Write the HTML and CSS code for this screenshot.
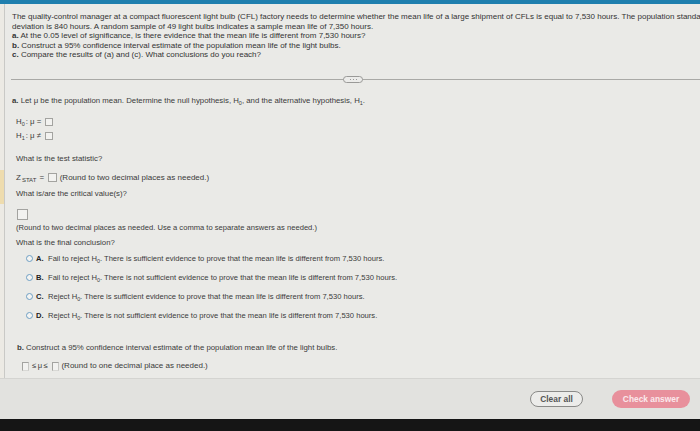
FILE: index.html
```html
<!DOCTYPE html>
<html>
<head>
<meta charset="utf-8">
<link rel="stylesheet" href="styles.css">
</head>
<body>
<div class="topbar"></div>
<div class="main">
  <div class="gutter"><div class="mark"></div></div>
  <div class="panel">
    <div class="problem">
      <p>The quality-control manager at a compact fluorescent light bulb (CFL) factory needs to determine whether the mean life of a large shipment of CFLs is equal to 7,530 hours. The population standard</p>
      <p>deviation is 840 hours. A random sample of 49 light bulbs indicates a sample mean life of 7,350 hours.</p>
      <p><b>a.</b> At the 0.05 level of significance, is there evidence that the mean life is different from 7,530 hours?</p>
      <p><b>b.</b> Construct a 95% confidence interval estimate of the population mean life of the light bulbs.</p>
      <p><b>c.</b> Compare the results of (a) and (c). What conclusions do you reach?</p>
    </div>
    <div class="divider"><span class="pill"><i></i><i></i><i></i></span></div>
    <div class="content">
      <p class="q1"><b>a.</b> Let μ be the population mean. Determine the null hypothesis, H<sub>0</sub>, and the alternative hypothesis, H<sub>1</sub>.</p>
      <div class="hyp first">H<sub>0</sub>: μ = <span class="box"></span></div>
      <div class="hyp">H<sub>1</sub>: μ ≠ <span class="box"></span></div>
      <p class="q2">What is the test statistic?</p>
      <div class="zline">Z<sub class="stat">STAT</sub> = <span class="box"></span> <span class="note">(Round to two decimal places as needed.)</span></div>
      <p class="q3">What is/are the critical value(s)?</p>
      <div class="cvbox"><span class="box big"></span></div>
      <p class="q4">(Round to two decimal places as needed. Use a comma to separate answers as needed.)</p>
      <p class="q5">What is the final conclusion?</p>
      <ul class="opts">
        <li><span class="radio"></span><b>A.</b><span>Fail to reject H<sub>0</sub>. There is sufficient evidence to prove that the mean life is different from 7,530 hours.</span></li>
        <li><span class="radio"></span><b>B.</b><span>Fail to reject H<sub>0</sub>. There is not sufficient evidence to prove that the mean life is different from 7,530 hours.</span></li>
        <li><span class="radio"></span><b>C.</b><span>Reject H<sub>0</sub>. There is sufficient evidence to prove that the mean life is different from 7,530 hours.</span></li>
        <li><span class="radio"></span><b>D.</b><span>Reject H<sub>0</sub>. There is not sufficient evidence to prove that the mean life is different from 7,530 hours.</span></li>
      </ul>
      <p class="q6"><b>b.</b> Construct a 95% confidence interval estimate of the population mean life of the light bulbs.</p>
      <div class="interval"><span class="box open"></span><span class="sym">≤μ≤</span><span class="box open"></span> <span class="note">(Round to one decimal place as needed.)</span></div>
    </div>
  </div>
</div>
<div class="footer">
  <button class="btn clear">Clear all</button>
  <button class="btn check">Check answer</button>
</div>
<div class="black"></div>
</body>
</html>
```
FILE: styles.css
```css
html, body {
  margin: 0;
  padding: 0;
}
body {
  width: 700px;
  height: 431px;
  overflow: hidden;
  background: #e7e7e4;
  font-family: "Liberation Sans", Arial, sans-serif;
  color: #3a3a3a;
  display: flex;
  flex-direction: column;
}
p { margin: 0; }
sub { font-size: 70%; vertical-align: -2px; line-height: 0; }
.topbar {
  height: 4px;
  background: #1f7fae;
  flex: none;
}
.main {
  display: flex;
  height: 374px;
  flex: none;
}
.gutter {
  width: 4px;
  background: #eceae4;
  flex: none;
}
.mark {
  margin-top: 166px;
  height: 34px;
  background: #eedcae;
}
.panel {
  flex: 1;
  border-left: 1px solid #c9c9c6;
  background: #eaeae7;
  min-width: 0;
}
.problem {
  padding: 8px 0 0 7px;
  font-size: 8px;
  line-height: 9.5px;
  white-space: nowrap;
  overflow: hidden;
  color: #333;
}
.divider {
  margin: 19.5px 0 0 6px;
  height: 1px;
  background: #a9a9a6;
  position: relative;
}
.pill {
  position: absolute;
  left: 332px;
  top: -3px;
  width: 20px;
  height: 7px;
  border: 1px solid #9a9a98;
  border-radius: 4px;
  background: #ececea;
  box-sizing: border-box;
  display: flex;
  justify-content: center;
  align-items: center;
  gap: 2px;
}
.pill i {
  width: 1px;
  height: 1px;
  background: #999;
}
.content {
  padding: 0 0 0 7px;
  font-size: 7.8px;
  line-height: 9px;
  white-space: nowrap;
  color: #3a3a3a;
}
.q1 { margin-top: 15.5px; }
.hyp {
  height: 14px;
  line-height: 14px;
  padding-left: 4px;
}
.hyp sub { margin-right: 1px; }
.hyp .box { margin-left: 2px; }
.hyp.first { margin-top: 10.5px; }
.box {
  display: inline-block;
  width: 8px;
  height: 8px;
  border: 1px solid #a3a3a0;
  background: #f2f2f0;
  box-sizing: border-box;
  vertical-align: middle;
  margin-left: 0;
}
.box.big {
  width: 11px;
  height: 11px;
}
.box.open {
  width: 7px;
  height: 9px;
  border-right-color: #c8c8c5;
  border-bottom-color: #d8d8d5;
}
.q2 { margin-top: 10.5px; padding-left: 4px; }
.zline {
  margin-top: 9.5px;
  height: 12px;
  line-height: 12px;
  padding-left: 4px;
  font-size: 8px;
}
.zline .stat { font-size: 6px; margin: 0 1px 0 1px; }
.zline .box { width: 9px; height: 9px; margin-left: 2px; }
.zline .note { font-size: 8px; }
.q3 { margin-top: 4.5px; padding-left: 4px; }
.cvbox { margin-top: 11px; height: 11px; line-height: 11px; padding-left: 5px; }
.cvbox .box { vertical-align: top; }
.q4 { margin-top: 3px; padding-left: 4px; font-size: 7.6px; }
.q5 { margin-top: 6px; padding-left: 4px; }
.opts {
  list-style: none;
  margin: 3.15px 0 0 0;
  padding: 0 0 0 14px;
  font-size: 7.6px;
}
.opts li {
  display: flex;
  align-items: center;
  height: 18.7px;
}
.radio {
  width: 7px;
  height: 7px;
  border: 1px solid #6d9fc4;
  border-radius: 50%;
  background: #f4f4f2;
  flex: none;
  box-sizing: border-box;
}
.opts b {
  margin-left: 3px;
  width: 12px;
  color: #222;
}
.q6 { margin-top: 19px; padding-left: 5px; }
.interval {
  margin-top: 8px;
  height: 11px;
  line-height: 11px;
  padding-left: 10px;
  font-size: 8px;
}
.interval .sym { margin: 0 3px 0 3px; letter-spacing: 1.5px; font-size: 7.6px; }
.footer {
  flex: none;
  height: 40px;
  background: #e2e2df;
  border-top: 1px solid #d4d4d1;
  display: flex;
  align-items: center;
  justify-content: flex-end;
  padding-right: 10px;
  gap: 29px;
}
.btn {
  font-family: "Liberation Sans", Arial, sans-serif;
  font-weight: bold;
  border-radius: 9px;
  height: 16px;
  padding: 0 6px;
  cursor: pointer;
}
.clear {
  background: #ececea;
  border: 1.5px solid #8a8a88;
  color: #555;
  width: 53px;
  font-size: 8.4px;
}
.check {
  background: #e8909c;
  border: none;
  color: #fbe9ec;
  width: 78px;
  height: 18px;
  font-size: 8.4px;
}
.black {
  flex: 1;
  background: #151515;
}
```
